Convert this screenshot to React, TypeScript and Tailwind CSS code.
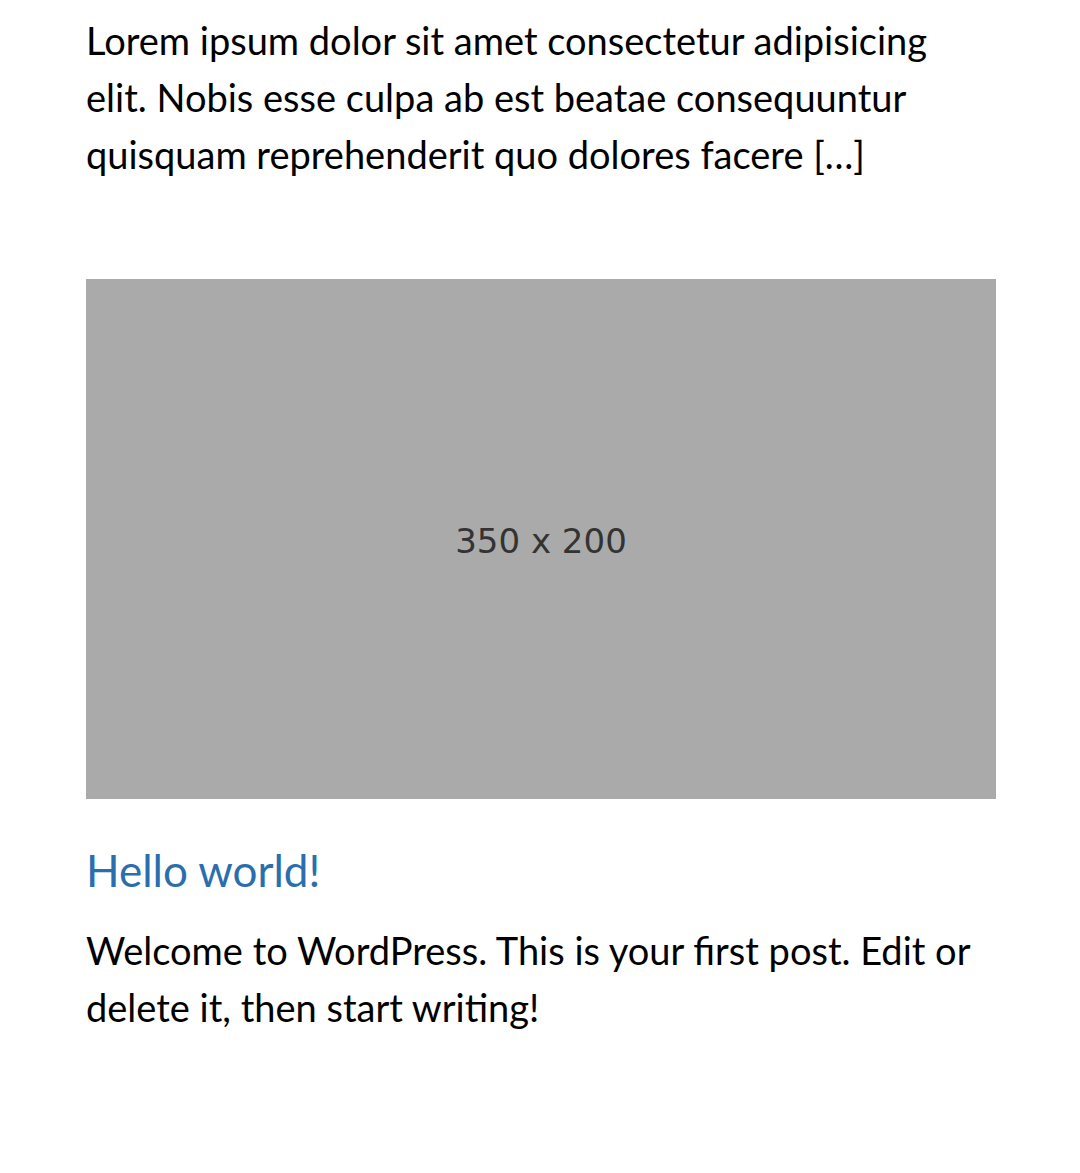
export default function App() {
  return (
    <div className="min-h-[1173px] bg-white px-[86px] pt-[12px] font-['Lato',sans-serif] text-black">
      <p className="text-[38px] leading-[57px]">
        Lorem ipsum dolor sit amet consectetur adipisicing elit. Nobis esse culpa ab est beatae consequuntur
        quisquam reprehenderit quo dolores facere […]
      </p>

      <article className="mt-[96px]">
        <div className="flex h-[520px] w-[910px] items-center justify-center bg-[#aaaaaa] pt-[4px]">
          <span className="font-['DejaVu_Sans',sans-serif] text-[34px] text-[#333333]">350 x 200</span>
        </div>
        <h2 className="mt-[42px] text-[44px] leading-[58px] text-[#2a6ead]">Hello world!</h2>
        <p className="mt-[23px] text-[38px] leading-[57px]">
          Welcome to WordPress. This is your first post. Edit or delete it, then start writing!
        </p>
      </article>
    </div>
  );
}
